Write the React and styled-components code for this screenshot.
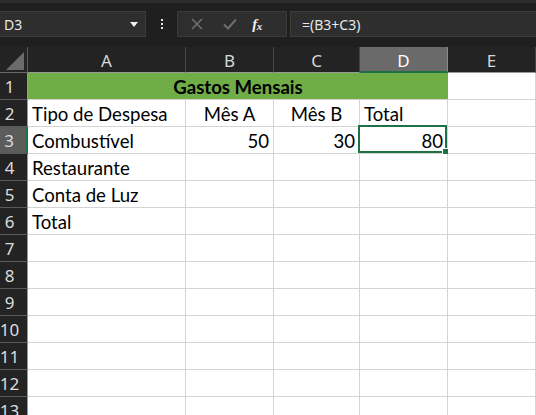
import React from "react";
import styled, { createGlobalStyle, css } from "styled-components";

const Global = createGlobalStyle`
  html, body { margin: 0; padding: 0; background: #1f1f1f; }
  body { width: 536px; height: 415px; overflow: hidden; }
  #root { width: 536px; height: 415px; overflow: hidden; }
`;

const Page = styled.div`
  display: flex;
  flex-direction: column;
  width: 536px;
  height: 415px;
  overflow: hidden;
  background: #1f1f1f;
`;

const TopStrip = styled.div`
  height: 3px;
  background: #2c2c2c;
  flex: none;
`;

const FormulaBar = styled.div`
  height: 44px;
  flex: none;
  display: flex;
  align-items: flex-start;
  padding-top: 8px;
  box-sizing: border-box;
  background: #1f1f1f;
  font-family: "Noto Sans", "Open Sans", sans-serif;
`;

const NameBox = styled.div`
  width: 146px;
  height: 26px;
  box-sizing: border-box;
  background: #2e2e2e;
  border: 1px solid #3c3c3c;
  border-left: none;
  display: flex;
  align-items: center;
  justify-content: space-between;
  padding: 0 7px 0 4px;
  color: #e8e8e8;
  font-size: 14px;
`;

const Caret = styled.span`
  width: 0;
  height: 0;
  border-left: 4px solid transparent;
  border-right: 4px solid transparent;
  border-top: 5px solid #f0f0f0;
  margin-top: 1px;
`;

const Dots = styled.div`
  width: 31px;
  height: 26px;
  display: flex;
  flex-direction: column;
  align-items: center;
  justify-content: center;
  gap: 2px;
  span {
    width: 2px;
    height: 2px;
    background: #e6e6e6;
  }
`;

const FxGroup = styled.div`
  width: 110px;
  height: 26px;
  box-sizing: border-box;
  background: #2e2e2e;
  border: 1px solid #3c3c3c;
  display: flex;
  align-items: center;
  padding-left: 13px;
`;

const IconSlot = styled.div`
  width: 36px;
  height: 24px;
  display: flex;
  align-items: center;
  justify-content: flex-start;
`;

const Fx = styled.span`
  font-family: "Liberation Serif", "DejaVu Serif", serif;
  font-style: italic;
  font-size: 15px;
  color: #f0f0f0;
  font-weight: bold;
  letter-spacing: -0.5px;
  margin-left: -2px;
  sub {
    font-size: 11px;
    vertical-align: -1px;
  }
`;

const FormulaInput = styled.div`
  flex: 1;
  margin-left: 3px;
  height: 26px;
  box-sizing: border-box;
  background: #2e2e2e;
  border: 1px solid #3c3c3c;
  border-right: none;
  display: flex;
  align-items: center;
  padding-left: 11px;
  color: #e8e8e8;
  font-size: 14px;
`;

const Sheet = styled.div`
  flex: 1;
  display: grid;
  grid-template-columns: 28px 158px 88px 86px 88px 1fr;
  grid-template-rows: 26px repeat(13, 27px);
  overflow: hidden;
  background: #ffffff;
`;

const Corner = styled.div`
  background: #232323;
  border-right: 1px solid #5a5a5a;
  border-bottom: 1px solid #6a6a6a;
  box-sizing: border-box;
  display: flex;
  align-items: flex-end;
  justify-content: flex-end;
  padding: 0 3px 2px 0;
`;

const CornerTri = styled.div`
  width: 18px;
  height: 18px;
  background: #6b6b6b;
  clip-path: polygon(100% 0, 100% 100%, 0 100%);
`;

const ColHeader = styled.div`
  box-sizing: border-box;
  background: ${(p) => (p.$selected ? "#6a6a6a" : "#232323")};
  border-right: 1px solid ${(p) => (p.$selected ? "#8a8a8a" : "#444444")};
  border-bottom: ${(p) => (p.$selected ? "2px solid #1e7145" : "1px solid #9a9a9a")};
  color: ${(p) => (p.$selected ? "#ffffff" : "#d8d8d8")};
  font-family: "Noto Sans", "Open Sans", sans-serif;
  font-size: 17px;
  display: flex;
  align-items: center;
  justify-content: center;
  padding-top: ${(p) => (p.$selected ? "2px" : "1px")};
`;

const RowHeader = styled.div`
  box-sizing: border-box;
  background: ${(p) => (p.$selected ? "#5c5c5c" : "#232323")};
  border-right: ${(p) => (p.$selected ? "2px solid #1e7145" : "1px solid #9a9a9a")};
  border-bottom: 1px solid #5a5a5a;
  color: #dcdcdc;
  font-family: "Noto Sans", "Open Sans", sans-serif;
  font-size: 17px;
  display: flex;
  align-items: center;
  justify-content: center;
  padding-right: 8px;
  padding-top: 1px;
`;

const Cell = styled.div`
  position: relative;
  box-sizing: border-box;
  background: #ffffff;
  border-right: 1px solid #d4d4d4;
  border-bottom: 1px solid #d4d4d4;
  color: #000000;
  font-family: "Lato", "Liberation Sans", sans-serif;
  font-size: 18.6px;
  line-height: 20px;
  display: flex;
  align-items: flex-end;
  padding: 0 4px 2px 4px;
  white-space: nowrap;
  justify-content: ${(p) =>
    p.$align === "right" ? "flex-end" : p.$align === "center" ? "center" : "flex-start"};
  ${(p) =>
    p.$title &&
    css`
      grid-column: 2 / 6;
      background: #70ad47;
      border-right: none;
      border-bottom: 1px solid #d4d4d4;
      font-weight: bold;
    `}
`;

const Selection = styled.div`
  position: absolute;
  left: -2px;
  top: -2px;
  right: 0;
  bottom: 0;
  border: 2px solid #1e7145;
  pointer-events: none;
`;

const Handle = styled.div`
  position: absolute;
  right: -3px;
  bottom: -3px;
  width: 5px;
  height: 5px;
  background: #1e7145;
  box-shadow: 0 0 0 1px #ffffff;
`;

const cols = ["A", "B", "C", "D", "E"];

const data = {
  2: ["Tipo de Despesa", "Mês A", "Mês B", "Total", ""],
  3: ["Combustível", "50", "30", "80", ""],
  4: ["Restaurante", "", "", "", ""],
  5: ["Conta de Luz", "", "", "", ""],
  6: ["Total", "", "", "", ""],
};

const align = {
  2: ["left", "center", "center", "left", "left"],
  3: ["left", "right", "right", "right", "left"],
};

function XIcon() {
  return (
    <svg width="12" height="12" viewBox="0 0 12 12">
      <path d="M1 1 L11 11 M11 1 L1 11" stroke="#6e6e6e" strokeWidth="1.6" fill="none" />
    </svg>
  );
}

function CheckIcon() {
  return (
    <svg width="14" height="12" viewBox="0 0 14 12">
      <path d="M1 6.5 L5 10.5 L13 1.5" stroke="#6e6e6e" strokeWidth="2" fill="none" />
    </svg>
  );
}

export default function App() {
  const rows = Array.from({ length: 13 }, (_, i) => i + 1);
  return (
    <Page>
      <Global />
      <TopStrip />
      <FormulaBar>
        <NameBox>
          <span>D3</span>
          <Caret />
        </NameBox>
        <Dots>
          <span />
          <span />
          <span />
        </Dots>
        <FxGroup>
          <IconSlot>
            <XIcon />
          </IconSlot>
          <IconSlot>
            <CheckIcon />
          </IconSlot>
          <IconSlot>
            <Fx>
              f<sub>x</sub>
            </Fx>
          </IconSlot>
        </FxGroup>
        <FormulaInput>=(B3+C3)</FormulaInput>
      </FormulaBar>
      <Sheet>
        <Corner>
          <CornerTri />
        </Corner>
        {cols.map((c) => (
          <ColHeader key={c} $selected={c === "D"}>
            {c}
          </ColHeader>
        ))}
        {rows.map((r) => (
          <React.Fragment key={r}>
            <RowHeader $selected={r === 3}>{r}</RowHeader>
            {r === 1 ? (
              <>
                <Cell $title $align="center">
                  Gastos Mensais
                </Cell>
                <Cell />
              </>
            ) : (
              cols.map((c, ci) => {
                const v = data[r] ? data[r][ci] : "";
                const a = align[r] ? align[r][ci] : "left";
                return (
                  <Cell key={c} $align={a}>
                    {v}
                    {r === 3 && c === "D" && (
                      <Selection>
                        <Handle />
                      </Selection>
                    )}
                  </Cell>
                );
              })
            )}
          </React.Fragment>
        ))}
      </Sheet>
    </Page>
  );
}
